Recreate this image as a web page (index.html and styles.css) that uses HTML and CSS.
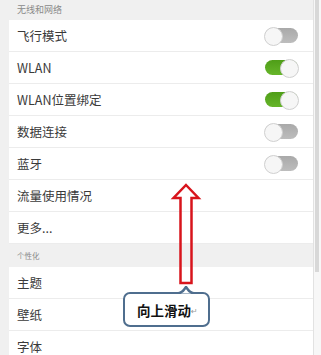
FILE: index.html
```html
<!DOCTYPE html>
<html lang="zh-CN">
<head>
    <meta charset="UTF-8">
    <title>设置</title>
    <link rel="stylesheet" href="styles.css">
</head>
<body>
    <div class="screen">
        <div class="settings">
            <div class="group-title">无线和网络</div>
            <div class="group">
                <div class="row"><span>飞行模式</span><span class="switch"></span></div>
                <div class="row"><span>WLAN</span><span class="switch on"></span></div>
                <div class="row"><span>WLAN位置绑定</span><span class="switch on"></span></div>
                <div class="row"><span>数据连接</span><span class="switch"></span></div>
                <div class="row"><span>蓝牙</span><span class="switch"></span></div>
                <div class="row"><span>流量使用情况</span></div>
                <div class="row"><span>更多...</span></div>
            </div>
            <div class="group-title small">个性化</div>
            <div class="group">
                <div class="row"><span>主题</span></div>
                <div class="row"><span>壁纸</span></div>
                <div class="row"><span>字体</span></div>
            </div>
        </div>
        <div class="scrollbar"><div class="thumb"></div></div>

        <!-- annotation on top of the screenshot -->
        <svg class="arrow" width="32" height="104" viewBox="0 0 32 104">
            <path d="M16 2 L28.5 15 L21.5 15 L21.5 100 L10.5 100 L10.5 15 L3.5 15 Z"
                  fill="none" stroke="#d8141c" stroke-width="2.5" stroke-linejoin="miter"/>
        </svg>
        <div class="callout">
            <svg class="tail" width="18" height="8" viewBox="0 0 18 8">
                <path d="M0 7.5 Q5 7.5 9 1 Q13 7.5 18 7.5" fill="#fff" stroke="#4f6e8e" stroke-width="2.5"/>
            </svg>
            <span class="callout-text">向上滑动</span><span class="mark">↵</span>
        </div>
    </div>
</body>
</html>
```

FILE: styles.css
```css
* {
    margin: 0;
    padding: 0;
    box-sizing: border-box;
}

body {
    font-family: "Noto Sans CJK SC", "Noto Sans", sans-serif;
    background: #f0f0f0;
    width: 321px;
    height: 355px;
    overflow: hidden;
}

.screen {
    position: relative;
    display: flex;
    height: 355px;
}

.settings {
    flex: 1;
}

.group-title {
    height: 20px;
    line-height: 20px;
    padding-left: 17px;
    font-size: 9px;
    color: #8a8a8a;
}

.group-title.small {
    height: 23px;
    line-height: 23px;
    font-size: 7.5px;
}

.group {
    margin-left: 9px;
    background: #fff;
}

.row {
    height: 32px;
    display: flex;
    align-items: center;
    justify-content: space-between;
    padding: 0 15px 0 8px;
    border-bottom: 1px solid #ececec;
    font-size: 12.5px;
    color: #3a3a3a;
}

.switch {
    position: relative;
    width: 33px;
    height: 15px;
    border-radius: 8px;
    background: linear-gradient(#a9a9a9, #bdbdbd);
}

.switch::after {
    content: "";
    position: absolute;
    left: -1px;
    top: -1px;
    width: 17px;
    height: 17px;
    border-radius: 50%;
    background: #f6f6f6;
    border: 1px solid #d0d0d0;
}

.switch.on {
    background: linear-gradient(#4f9e18, #66b52a);
}

.switch.on::after {
    left: auto;
    right: -1px;
}

.scrollbar {
    width: 8px;
    background: #f7f7f7;
    border-left: 1px solid #e2e2e2;
}

.thumb {
    width: 4px;
    height: 272px;
    margin-left: 1px;
    background: #d8d8d8;
}

.arrow {
    position: absolute;
    left: 170px;
    top: 183px;
}

.callout {
    position: absolute;
    left: 123px;
    top: 292px;
    width: 87px;
    height: 35px;
    border: 2.5px solid #4f6e8e;
    border-radius: 7px;
    background: #fff;
    display: flex;
    align-items: center;
    padding-left: 12px;
}

.tail {
    position: absolute;
    left: 52px;
    top: -8px;
}

.callout-text {
    font-size: 13.5px;
    font-weight: bold;
    color: #111;
}

.mark {
    font-family: "DejaVu Sans", sans-serif;
    font-size: 8px;
    color: #999;
    margin-top: 3px;
}
```
